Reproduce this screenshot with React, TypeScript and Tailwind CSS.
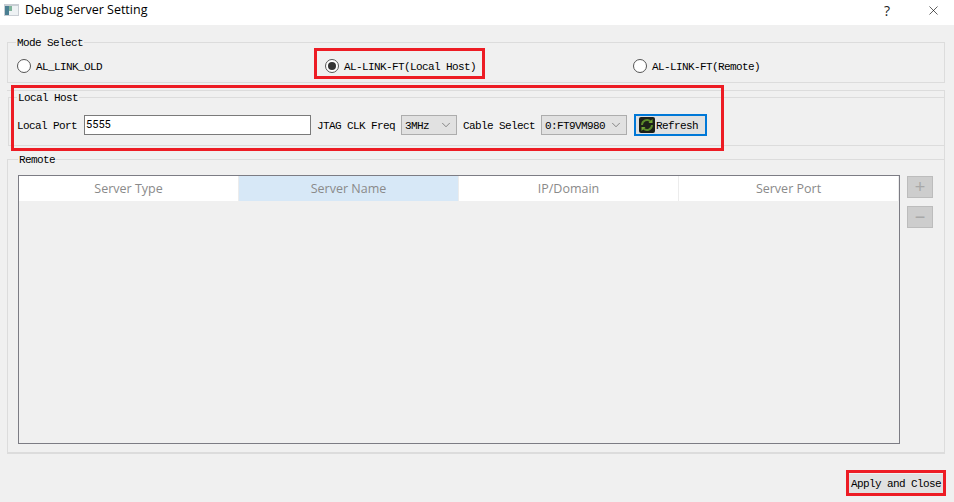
import { ChevronDown, X } from 'lucide-react';

const mono = "font-['Liberation_Mono',monospace] text-[11px] tracking-[-0.6px] text-black";
const label = `${mono} pt-[2px]`;
const columns = ['Server Type', 'Server Name', 'IP/Domain', 'Server Port'];

function GroupTitle({ title, left }: { title: string; left: string }) {
  return <div className={`absolute -top-[6px] bg-[#f0f0f0] px-[1px] leading-[12px] ${left} ${mono}`}>{title}</div>;
}

function Radio({ checked, text }: { checked?: boolean; text: string }) {
  return (
    <div className="flex items-center gap-[5px]">
      <div className="flex h-[14px] w-[14px] items-center justify-center rounded-full border border-[#555] bg-white">
        {checked && <div className="h-[8px] w-[8px] rounded-full bg-[#333]" />}
      </div>
      <span className={label}>{text}</span>
    </div>
  );
}

function Combo({ value, width }: { value: string; width: string }) {
  return (
    <div className={`flex h-[20px] items-center justify-between border border-[#adadad] bg-[#e1e1e1] pl-[3px] pr-[3px] ${width}`}>
      <span className={label}>{value}</span>
      <ChevronDown size={14} strokeWidth={1} className="text-[#444]" />
    </div>
  );
}

function RefreshIcon() {
  return (
    <svg width="16" height="16" viewBox="0 0 16 16">
      <rect width="16" height="16" rx="2" fill="#1d2019" />
      <path d="M3 8a5 5 0 0 1 8.500-3.500" fill="none" stroke="#5c8a2a" strokeWidth="2" />
      <path d="M13 8a5 5 0 0 1-8.500 3.500" fill="none" stroke="#5c8a2a" strokeWidth="2" />
      <path d="M13.500 2v4h-4zM2.500 14v-4h4z" fill="#74a534" />
    </svg>
  );
}

function SideButton({ text }: { text: string }) {
  return (
    <div className="flex h-[22px] w-[26px] items-center justify-center border border-[#bcbcbc] bg-[#cdcdcd] font-['Liberation_Sans',sans-serif] text-[18px] leading-none text-[#a8a8a8]">
      {text}
    </div>
  );
}

function Annotation({ className }: { className: string }) {
  return <div className={`pointer-events-none absolute border-[3px] border-[#ed1c24] ${className}`} />;
}

export default function App() {
  return (
    <div className="relative flex h-screen w-screen flex-col overflow-hidden bg-[#f0f0f0]">
      <div className="flex h-[25px] shrink-0 items-center bg-white pb-[5px] pl-[4px]">
        <svg width="15" height="12" viewBox="0 0 15 12" className="mb-[1px]">
          <rect width="15" height="12" fill="#c9ced4" />
          <rect x="1" y="2" width="13" height="9" fill="#eef2f4" />
          <rect x="1" y="2" width="4" height="9" fill="#4a7f92" />
          <rect x="5" y="2" width="3" height="5" fill="#7fb39a" />
        </svg>
        <span className="ml-[6px] font-['Open_Sans',sans-serif] text-[12.5px] text-black">Debug Server Setting</span>
        <span className="ml-auto font-['Open_Sans',sans-serif] text-[14px] text-[#222]">?</span>
        <X size={15} strokeWidth={1} className="ml-[36px] mr-[13px] text-black" />
      </div>

      <div className="flex flex-1 flex-col pl-[7px] pr-[9px] pt-[17px]">
        <div className="relative flex h-[41px] shrink-0 items-center border border-[#dcdcdc] pl-[9px] pt-[7px]">
          <GroupTitle title="Mode Select" left="left-[8px]" />
          <div className="w-[308px]"><Radio text="AL_LINK_OLD" /></div>
          <div className="w-[308px]"><Radio checked text="AL-LINK-FT(Local Host)" /></div>
          <Radio text="AL-LINK-FT(Remote)" />
        </div>

        <div className="mt-[7px] h-[69px] shrink-0 border-r border-t border-[#dcdcdc] pl-[1px] pt-[6px]">
          <div className="relative flex h-[49px] items-center gap-[6px] border border-r-0 border-[#dcdcdc] pl-[8px] pt-[7px]">
            <GroupTitle title="Local Host" left="left-[8px]" />
            <span className={label}>Local Port</span>
            <div className="ml-[1px] flex h-[20px] w-[227px] items-center border border-[#7a7a7a] bg-white pl-[1px] font-['Roboto',sans-serif] text-[11px] text-black">5555</div>
            <span className={label}>JTAG CLK Freq</span>
            <Combo value="3MHz" width="w-[56px]" />
            <span className={label}>Cable Select</span>
            <Combo value="0:FT9VM980" width="w-[86px]" />
            <div className="ml-[1px] flex h-[22px] w-[73px] items-center gap-[1px] border-2 border-[#0078d7] bg-[#e1e1e1] pl-[3px]">
              <RefreshIcon />
              <span className={label}>Refresh</span>
            </div>
          </div>
        </div>

        <div className="relative flex h-[295px] shrink-0 gap-[7px] border border-b-2 border-[#dcdcdc] pl-[10px] pt-[15px]">
          <GroupTitle title="Remote" left="left-[10px]" />
          <div className="h-[269px] w-[882px] shrink-0 border border-[#7c7c84]">
            <div className="grid h-[25px] grid-cols-4 bg-white font-['Open_Sans',sans-serif] text-[12.5px] text-[#8a8a8a]">
              {columns.map((name, i) => (
                <div key={name} className={`flex items-center justify-center border-r border-[#ececec] pt-[2px] ${i === 1 ? 'bg-[#d7e8f7]' : ''}`}>
                  {name}
                </div>
              ))}
            </div>
          </div>
          <div className="flex flex-col gap-[8px] pt-[1px]">
            <SideButton text="+" />
            <SideButton text="−" />
          </div>
        </div>

        <div className="flex flex-1 items-start justify-end pr-[2px] pt-[20px]">
          <div className="flex h-[21px] w-[94px] items-center justify-center border-b-2 border-[#a8a8a8] bg-[#e1e1e1]">
            <span className={label}>Apply and Close</span>
          </div>
        </div>
      </div>

      <Annotation className="left-[314px] top-[48px] h-[31px] w-[171px]" />
      <Annotation className="left-[11px] top-[85px] h-[66px] w-[713px]" />
      <Annotation className="left-[846px] top-[470px] h-[26px] w-[100px]" />
    </div>
  );
}
